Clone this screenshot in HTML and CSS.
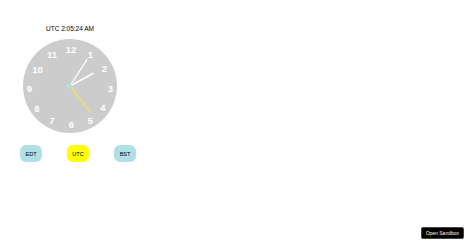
FILE: index.html
```html
<!DOCTYPE html>
<html lang="en">
<head>
  <meta charset="UTF-8">
  <title>World Clock</title>
  <link rel="stylesheet" href="styles.css">
</head>
<body>
  <div class="app">
    <div class="clock-box">
      <div class="clock-title">UTC 2:05:24 AM</div>
      <svg class="clock" width="94" height="94" viewBox="0 0 94 94">
        <circle cx="47" cy="47" r="47" fill="#cccccc"/>
        <g class="numbers">
          <text x="48" y="10">12</text>
          <text x="67.5" y="15.5">1</text>
          <text x="81.5" y="29.5">2</text>
          <text x="87.5" y="49">3</text>
          <text x="80" y="68.5">4</text>
          <text x="67.5" y="81.5">5</text>
          <text x="48.5" y="85">6</text>
          <text x="29" y="81.5">7</text>
          <text x="14" y="69">8</text>
          <text x="6.5" y="49">9</text>
          <text x="14.5" y="30">10</text>
          <text x="29" y="15.5">11</text>
        </g>
        <line x1="47" y1="47" x2="70" y2="34.5" stroke="#fff" stroke-width="1.5" stroke-linecap="round"/>
        <line x1="47" y1="47" x2="64" y2="20.5" stroke="#fff" stroke-width="1.3" stroke-linecap="round"/>
        <line x1="47" y1="47" x2="67" y2="73" stroke="#ece35a" stroke-width="1.3" stroke-linecap="round"/>
        <circle cx="46.5" cy="47" r="2.5" fill="#b0e0e6"/>
      </svg>
    </div>
    <div class="zones">
      <button type="button" class="zone">EDT</button>
      <button type="button" class="zone active">UTC</button>
      <button type="button" class="zone">BST</button>
    </div>
  </div>
  <button type="button" class="sandbox">Open Sandbox</button>
</body>
</html>
```

FILE: styles.css
```css
body {
  margin: 0;
  font-family: "Liberation Sans", Arial, sans-serif;
  background: #fff;
  color: #000;
}

.app {
  padding: 24px 0 0 23px;
}

.clock-box {
  width: 94px;
}

.clock-title {
  font-size: 6.5px;
  line-height: 10px;
  height: 10px;
  text-align: center;
  margin-bottom: 5px;
}

.clock {
  display: block;
}

.numbers text {
  fill: #fff;
  font-family: "Liberation Sans", Arial, sans-serif;
  font-weight: bold;
  font-size: 9.5px;
  text-anchor: middle;
  dominant-baseline: central;
}

.zones {
  display: flex;
  gap: 25px;
  margin: 12px 0 0 -3px;
}

.zone {
  width: 22px;
  height: 17px;
  padding: 0;
  border: none;
  border-radius: 6px;
  background: #b0e0e6;
  font-family: "Liberation Sans", Arial, sans-serif;
  font-size: 5.5px;
  color: #000;
}

.zone.active {
  background: #ffff00;
}

.sandbox {
  position: fixed;
  right: 10px;
  bottom: 9px;
  padding: 0 4px;
  height: 12px;
  border: 1px solid #444;
  border-radius: 2px;
  background: #000;
  color: #fff;
  font-family: "Liberation Sans", Arial, sans-serif;
  font-size: 5px;
}
```
